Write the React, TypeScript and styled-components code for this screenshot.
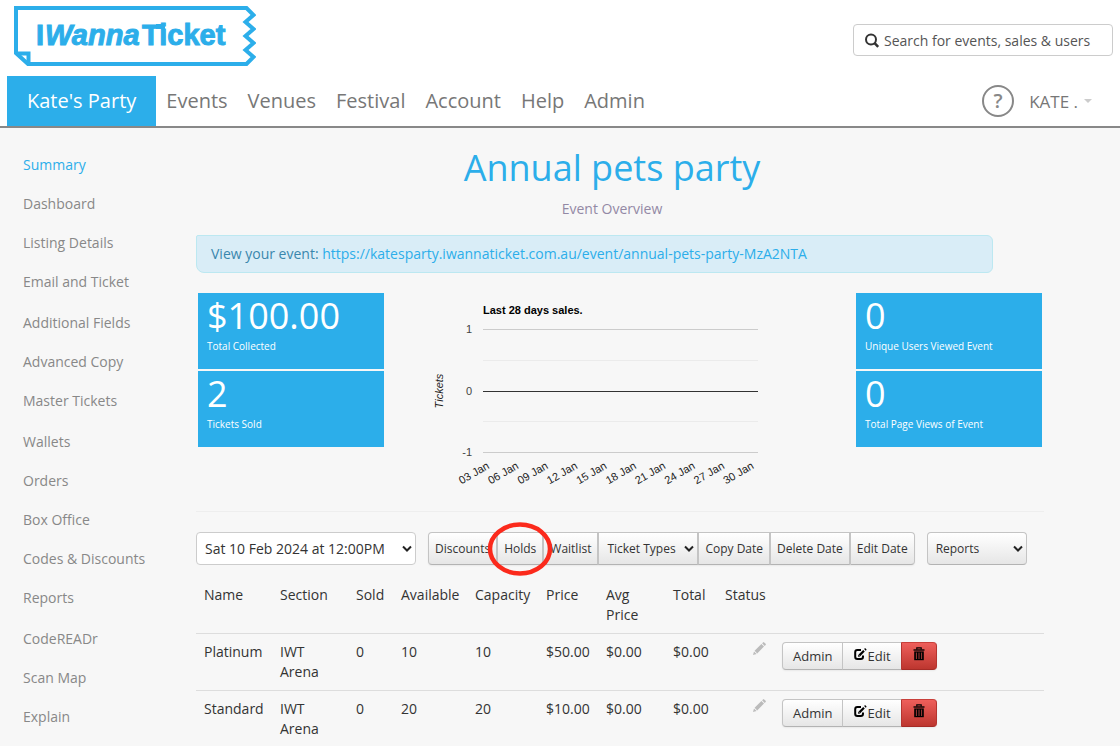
import React from "react";
import styled, { createGlobalStyle } from "styled-components";

const sans = `"Open Sans", "Noto Sans", "Liberation Sans", sans-serif`;
const blue = "#2caeea";

const GlobalStyle = createGlobalStyle`
  *, *::before, *::after { box-sizing: border-box; }
  body { margin: 0; background: #f7f7f7; color: #333; font: 14px/20px ${sans}; }
  a { color: inherit; text-decoration: none; }
  button, input, select { font-family: inherit; color: inherit; }
`;

const Header = styled.header`
  background: #fff;
  border-bottom: 2px solid #888;
`;
const BrandRow = styled.div`
  display: flex;
  justify-content: space-between;
  align-items: flex-start;
  height: 76px;
  padding: 6px 7px 0 14px;
`;
const LogoLink = styled.a`
  display: block;
  svg { display: block; }
`;
const SearchBox = styled.label`
  display: flex;
  align-items: center;
  gap: 4px;
  width: 260px;
  height: 32px;
  margin-top: 18px;
  padding: 0 10px;
  background: #fff;
  border: 1px solid #ccc;
  border-radius: 4px;
`;
const SearchInput = styled.input`
  flex: 1;
  min-width: 0;
  padding: 0;
  border: 0;
  outline: 0;
  background: none;
  font-size: 14px;
  &::placeholder { color: #555; opacity: 1; }
`;
const NavRow = styled.nav`
  display: flex;
  justify-content: space-between;
  padding: 0 28px 0 7px;
`;
const NavList = styled.div`
  display: flex;
`;
const NavLink = styled.a<{ $active?: boolean }>`
  padding: 0 ${(p) => (p.$active ? 20 : 10)}px;
  font-size: 20px;
  line-height: 50px;
  color: ${(p) => (p.$active ? "#fff" : "#777")};
  background: ${(p) => (p.$active ? blue : "transparent")};
`;
const UserArea = styled.div`
  display: flex;
  align-items: center;
  gap: 15px;
  color: #777;
`;
const HelpButton = styled.button`
  width: 32px;
  height: 32px;
  padding: 0;
  border: 2px solid #888;
  border-radius: 50%;
  background: none;
  color: #888;
  font-size: 20px;
  font-weight: 600;
  line-height: 28px;
`;
const UserButton = styled.button`
  display: flex;
  align-items: center;
  gap: 6px;
  padding: 0;
  border: 0;
  background: none;
  color: #777;
  font-size: 17px;
`;

const Page = styled.div`
  display: grid;
  grid-template-columns: 196px minmax(0, 1fr);
`;
const Sidebar = styled.nav`
  display: flex;
  flex-direction: column;
  gap: 2px;
  padding: 17px 0 0 23px;
`;
const SideGroup = styled.ul`
  margin: 0;
  padding: 0;
  list-style: none;
`;
const SideLink = styled.a<{ $active?: boolean }>`
  display: block;
  line-height: 39px;
  color: ${(p) => (p.$active ? blue : "#888")};
`;

const Main = styled.main`
  padding: 16px 76px 0 0;
`;
const Heading = styled.div`
  padding-right: 16px;
  text-align: center;
`;
const Title = styled.h1`
  margin: 0;
  font-size: 36px;
  font-weight: 400;
  line-height: 48px;
  color: ${blue};
`;
const Subtitle = styled.p`
  margin: 7px 0 0;
  color: #9389a5;
`;
const Notice = styled.p`
  margin: 16px 51px 0 0;
  padding: 8px 14px;
  border: 1px solid #bce8f1;
  border-radius: 2px 6px 6px 8px;
  background: #d9edf7;
  color: #3a87ad;
  a { color: ${blue}; }
`;
const Overview = styled.section`
  display: flex;
  justify-content: space-between;
  align-items: flex-start;
  padding: 20px 2px 16px;
  border-bottom: 1px solid #eee;
`;
const TileColumn = styled.div`
  display: grid;
  gap: 2px;
  width: 186px;
`;
const Tile = styled.div`
  height: 76px;
  padding: 3px 9px;
  background: ${blue};
  color: #fff;
`;
const TileValue = styled.div`
  font-size: 36px;
  font-weight: 500;
  line-height: 40px;
`;
const TileLabel = styled.div`
  font-size: 10px;
  line-height: 20px;
`;
const Chart = styled.svg`
  display: block;
  margin: 0 auto 0 44px;
  font-family: "Liberation Sans", Arial, sans-serif;
  font-size: 11px;
`;

const Toolbar = styled.div`
  display: flex;
  gap: 12px;
  margin-top: 20px;
`;
const buttonFace = `
  border: 1px solid #c4c4c4;
  border-bottom-color: #b3b3b3;
  background: linear-gradient(#fff, #e6e6e6);
  color: #333;
`;
const ButtonGroup = styled.div`
  display: flex;
  width: fit-content;
  box-shadow: 0 1px 2px rgba(0, 0, 0, 0.06);
  border-radius: 4px;
  > :first-child { border-radius: 4px 0 0 4px; }
  > :last-child { border-radius: 0 4px 4px 0; }
`;
const RowActions = styled(ButtonGroup)`
  > * + * { margin-left: -1px; }
`;
const ToolButton = styled.button`
  ${buttonFace}
  height: 33px;
  padding: 0 6px;
  font-size: 12px;
  white-space: nowrap;
`;
const SelectWrap = styled.span<{ $width: number }>`
  position: relative;
  display: block;
  width: ${(p) => p.$width}px;
  svg {
    position: absolute;
    right: 3px;
    top: 13px;
    pointer-events: none;
  }
`;
const Select = styled.select<{ $plain?: boolean; $round?: boolean }>`
  ${buttonFace}
  appearance: none;
  display: block;
  width: 100%;
  height: 33px;
  padding: 0 8px;
  font-size: 12px;
  border-radius: ${(p) => (p.$round ? 4 : 0)}px;
  ${(p) => p.$plain && "background: #fff; border-color: #ccc; font-size: 14px;"}
`;
const Circled = styled.span`
  position: relative;
  display: flex;
  svg {
    position: absolute;
    z-index: 1;
    left: 50%;
    top: 50%;
    transform: translate(-50%, -50%);
    pointer-events: none;
  }
`;

const Table = styled.table`
  width: 100%;
  margin-top: 12px;
  table-layout: fixed;
  border-collapse: separate;
  border-spacing: 0;
`;
const Th = styled.th`
  height: 56px;
  padding: 8px;
  text-align: left;
  vertical-align: top;
  font-weight: 400;
`;
const Td = styled.td<{ $icon?: boolean }>`
  height: 57px;
  padding: 8px;
  border-top: 1px solid #ddd;
  vertical-align: top;
  text-align: ${(p) => (p.$icon ? "right" : "left")};
`;
const IconButton = styled.button`
  padding: 0;
  border: 0;
  background: none;
  vertical-align: top;
  svg { display: block; }
`;
const RowButton = styled.button<{ $danger?: boolean }>`
  ${buttonFace}
  display: flex;
  align-items: center;
  height: 28px;
  padding: 0 ${(p) => (p.$danger ? 11 : 10)}px;
  font-size: 13px;
  svg { margin-bottom: 4px; }
  ${(p) =>
    p.$danger &&
    "background: linear-gradient(#ee5f5b, #bd362f); border-color: #c9403b #b53530 #a52b26;"}
`;

const Chevron = () => (
  <svg width="12" height="8" viewBox="0 0 12 8" fill="none" stroke="#222" strokeWidth="2">
    <path d="M2 1.5 6 5.5 10 1.5" />
  </svg>
);
const SearchIcon = () => (
  <svg width="16" height="16" viewBox="0 0 16 16" fill="none" stroke="#333">
    <circle cx="7" cy="7.600" r="5" strokeWidth="2" />
    <path d="M10.6 11.2 14.2 14.8" strokeWidth="2.6" />
  </svg>
);
const PencilIcon = () => (
  <svg width="13" height="13" viewBox="0 0 13 13" fill="#bbb">
    <path d="M0 13 1 9.4 3.6 12ZM1.6 8.8 8.4 2 11 4.6 4.2 11.4ZM9.1 1.3 10 .4Q10.6-.2 11.2.4L12.6 1.8Q13.2 2.4 12.6 3L11.7 3.9Z" />
  </svg>
);
const EditIcon = () => (
  <svg width="14" height="13" viewBox="0 0 14 13" fill="none" stroke="#000">
    <path d="M8 2H4.4Q2.200 2 2.200 4.2V8.8Q2.200 11 4.4 11H7.8Q10 11 10 8.8V7.4" strokeWidth="2" />
    <path d="M6.4 7.4 11 2.8" strokeWidth="2.2" />
    <path d="M5 8.8 5.4 6.6 7.2 8.4Z" fill="#000" stroke="none" />
    <path d="M11.9 1.900 12.9.9" strokeWidth="2.2" />
  </svg>
);
const TrashIcon = () => (
  <svg width="12" height="14" viewBox="0 0 12 14" fill="none" stroke="#000">
    <path d="M.5 3H11.5" strokeWidth="1.4" />
    <path d="M3.8 2.6V.8H8.2V2.6" strokeWidth="1.2" />
    <path d="M1.2 4.4H10.8V13.2H1.2Z" fill="#000" stroke="none" />
    <path d="M3.4 5.6V12M6 5.6V12M8.6 5.6V12" stroke="#c94a46" strokeWidth=".8" />
  </svg>
);

const Logo = () => (
  <svg width="242" height="60" viewBox="0 0 242 60" role="img" aria-label="IWannaTicket">
    <path
      d="M2 2H232.500L239.500 9L231.500 16L239.500 23L231.500 30L239.500 37L231.500 44L239.500 51L232.500 58H14L2 47Z"
      fill="#fff"
      stroke={blue}
      strokeWidth="4"
    />
    <path d="M2 47.500H14.500V58" fill="none" stroke={blue} strokeWidth="4" />
    <g fill={blue} stroke={blue} strokeWidth="1" fontFamily="Liberation Sans, Arial, sans-serif" fontWeight="700" fontSize="29">
      <text x="22" y="39">I</text>
      <text x="31" y="39" fontStyle="italic">Wanna</text>
      <text x="128" y="39">Ticket</text>
    </g>
    <path d="M142 20.500H151" stroke={blue} strokeWidth="5" />
  </svg>
);

const days = ["03", "06", "09", "12", "15", "18", "21", "24", "27", "30"];
const SalesChart = () => (
  <Chart width="340" height="202" viewBox="0 0 340 202" role="img" aria-label="Last 28 days sales">
    <text x="55" y="21" fontWeight="700" fill="#000">Last 28 days sales.</text>
    <g shapeRendering="crispEdges">
      <path d="M55 36.500H330M55 159.500H330" stroke="#ccc" />
      <path d="M55 67.500H330M55 128.500H330" stroke="#ebebeb" />
      <path d="M55 98.500H330" stroke="#333" />
    </g>
    <g fill="#444" textAnchor="end">
      <text x="44" y="40">1</text>
      <text x="44" y="102">0</text>
      <text x="44" y="163">-1</text>
    </g>
    <text transform="translate(15 98) rotate(-90)" textAnchor="middle" fontStyle="italic" fill="#222">
      Tickets
    </text>
    <g fill="#222" textAnchor="end">
      {days.map((d, i) => (
        <text key={d} transform={`translate(${62 + i * 29.4} 175) rotate(-30)`}>{d} Jan</text>
      ))}
    </g>
  </Chart>
);

const navItems = ["Events", "Venues", "Festival", "Account", "Help", "Admin"];
const sideGroups = [
  ["Summary", "Dashboard", "Listing Details", "Email and Ticket"],
  ["Additional Fields", "Advanced Copy", "Master Tickets"],
  ["Wallets", "Orders", "Box Office", "Codes & Discounts", "Reports"],
  ["CodeREADr", "Scan Map", "Explain"],
];
const columns: [string, number][] = [
  ["Name", 76],
  ["Section", 76],
  ["Sold", 45],
  ["Available", 74],
  ["Capacity", 71],
  ["Price", 60],
  ["Avg Price", 67],
  ["Total", 52],
  ["Status", 57],
];
const rows = [
  ["Platinum", "IWT Arena", "0", "10", "10", "$50.00", "$0.00", "$0.00"],
  ["Standard", "IWT Arena", "0", "20", "20", "$10.00", "$0.00", "$0.00"],
];

const StatTile = ({ value, label }: { value: string; label: string }) => (
  <Tile>
    <TileValue>{value}</TileValue>
    <TileLabel>{label}</TileLabel>
  </Tile>
);

export default function App() {
  return (
    <>
      <GlobalStyle />
      <Header>
        <BrandRow>
          <LogoLink href="#"><Logo /></LogoLink>
          <SearchBox>
            <SearchIcon />
            <SearchInput type="text" aria-label="Search" placeholder="Search for events, sales & users" />
          </SearchBox>
        </BrandRow>
        <NavRow>
          <NavList>
            <NavLink href="#" $active>Kate's Party</NavLink>
            {navItems.map((n) => <NavLink href="#" key={n}>{n}</NavLink>)}
          </NavList>
          <UserArea>
            <HelpButton>?</HelpButton>
            <UserButton>
              KATE .
              <svg width="8" height="4" viewBox="0 0 8 4"><path d="M0 0H8L4 4Z" fill="#ccc" /></svg>
            </UserButton>
          </UserArea>
        </NavRow>
      </Header>
      <Page>
        <Sidebar>
          {sideGroups.map((g) => (
            <SideGroup key={g[0]}>
              {g.map((s) => (
                <li key={s}><SideLink href="#" $active={s === "Summary"}>{s}</SideLink></li>
              ))}
            </SideGroup>
          ))}
        </Sidebar>
        <Main>
          <Heading>
            <Title>Annual pets party</Title>
            <Subtitle>Event Overview</Subtitle>
          </Heading>
          <Notice>
            View your event:{" "}
            <a href="#">https://katesparty.iwannaticket.com.au/event/annual-pets-party-MzA2NTA</a>
          </Notice>
          <Overview>
            <TileColumn>
              <StatTile value="$100.00" label="Total Collected" />
              <StatTile value="2" label="Tickets Sold" />
            </TileColumn>
            <SalesChart />
            <TileColumn>
              <StatTile value="0" label="Unique Users Viewed Event" />
              <StatTile value="0" label="Total Page Views of Event" />
            </TileColumn>
          </Overview>
          <Toolbar>
            <SelectWrap $width={220}>
              <Select $plain $round aria-label="Date"><option>Sat 10 Feb 2024 at 12:00PM</option></Select>
              <Chevron />
            </SelectWrap>
            <ButtonGroup>
              <ToolButton>Discounts</ToolButton>
              <Circled>
                <ToolButton>Holds</ToolButton>
                <svg width="66" height="56" viewBox="0 0 66 56">
                  <ellipse cx="33" cy="28" rx="30" ry="24.500" fill="none" stroke="#fb2a1c" strokeWidth="4.500" />
                </svg>
              </Circled>
              <ToolButton>Waitlist</ToolButton>
              <SelectWrap $width={100}>
                <Select aria-label="Ticket types"><option>Ticket Types</option></Select>
                <Chevron />
              </SelectWrap>
              <ToolButton>Copy Date</ToolButton>
              <ToolButton>Delete Date</ToolButton>
              <ToolButton>Edit Date</ToolButton>
            </ButtonGroup>
            <SelectWrap $width={100}>
              <Select $round aria-label="Reports"><option>Reports</option></Select>
              <Chevron />
            </SelectWrap>
          </Toolbar>
          <Table>
            <colgroup>
              {columns.map(([n, w]) => <col key={n} width={w} />)}
              <col />
            </colgroup>
            <thead>
              <tr>
                {columns.map(([n]) => <Th key={n}>{n}</Th>)}
                <Th as="td" />
              </tr>
            </thead>
            <tbody>
              {rows.map((r) => (
                <tr key={r[0]}>
                  {r.map((c, i) => <Td key={i}>{c}</Td>)}
                  <Td $icon>
                    <IconButton aria-label="Change status"><PencilIcon /></IconButton>
                  </Td>
                  <Td>
                    <RowActions>
                      <RowButton>Admin</RowButton>
                      <RowButton><EditIcon />Edit</RowButton>
                      <RowButton $danger aria-label="Delete"><TrashIcon /></RowButton>
                    </RowActions>
                  </Td>
                </tr>
              ))}
            </tbody>
          </Table>
        </Main>
      </Page>
    </>
  );
}
